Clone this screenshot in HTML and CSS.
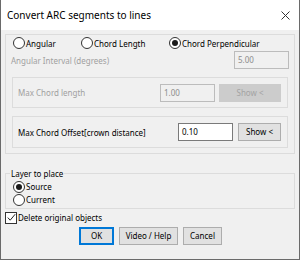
FILE: index.html
```html
<!DOCTYPE html>
<html lang="en">

<head>
    <meta charset="UTF-8">
    <title>Convert ARC segments to lines</title>
    <link rel="stylesheet" href="styles.css">
</head>

<body>
    <div class="window">
        <div class="titlebar">
            <span class="title">Convert ARC segments to lines</span>
            <svg class="close" width="9" height="9" viewBox="0 0 9 9">
                <path d="M0.5 0.5 L8.5 8.5 M8.5 0.5 L0.5 8.5" stroke="#333" stroke-width="1" fill="none"/>
            </svg>
        </div>

        <div class="content">
            <!-- Method group -->
            <div class="group method">
                <div class="radio-row">
                    <label class="radio opt-angular"><span class="dot"></span>Angular</label>
                    <label class="radio opt-length"><span class="dot"></span>Chord Length</label>
                    <label class="radio"><span class="dot checked"></span>Chord Perpendicular</label>
                </div>
                <div class="field-row">
                    <span class="muted">Angular Interval (degrees)</span>
                    <div class="input disabled">5.00</div>
                </div>

                <div class="group inner">
                    <span class="muted">Max Chord length</span>
                    <div class="input disabled push">1.00</div>
                    <div class="btn btn-disabled show-len">Show &lt;</div>
                </div>

                <div class="group inner second">
                    <span>Max Chord Offset[crown distance]</span>
                    <div class="input push">0.10</div>
                    <div class="btn show-offset">Show &lt;</div>
                </div>
            </div>

            <!-- Layer group -->
            <div class="group layer">
                <span class="legend">Layer to place</span>
                <label class="radio"><span class="dot checked"></span>Source</label>
                <label class="radio"><span class="dot"></span>Current</label>
            </div>

            <label class="check"><span class="box">
                <svg width="9" height="9" viewBox="0 0 9 9"><path d="M0.8 4.6 L3.2 7.2 L8.2 1.2" stroke="#222" stroke-width="1" fill="none"/></svg>
            </span>Delete original objects</label>

            <div class="buttons">
                <div class="btn btn-default">OK</div>
                <div class="btn btn-help">Video / Help</div>
                <div class="btn btn-cancel">Cancel</div>
            </div>
        </div>
    </div>
</body>

</html>
```

FILE: styles.css
```css
body {
    margin: 0;
    font-family: "Noto Sans", "Open Sans", sans-serif;
    font-size: 8px;
    color: #000;
    background: #fff;
}

.window {
    width: 300px;
    height: 260px;
    box-sizing: border-box;
    border: 1px solid #6a6a6a;
    border-top: none;
    background: #f0f0f0;
}

.titlebar {
    height: 30px;
    background: #fff;
    display: flex;
    align-items: center;
    justify-content: space-between;
    padding: 0 9px 0 6px;
}

.title {
    font-size: 10px;
    color: #000;
}

.content {
    padding: 4px 4px 0 4px;
}

.group {
    border: 1px solid #dcdcdc;
}

/* top group box */
.method {
    padding: 1px 5px 5px 5px;
}

.radio-row {
    display: flex;
    height: 14px;
    padding-left: 2px;
}

.radio {
    display: flex;
    align-items: center;
    height: 13px;
}

.radio-row .radio {
    height: 14px;
}

.opt-angular {
    width: 68px;
}

.opt-length {
    width: 88px;
}

.dot {
    width: 12px;
    height: 12px;
    border: 1px solid #333;
    border-radius: 50%;
    background: #fff;
    margin-right: 1px;
    box-sizing: border-box;
    position: relative;
}

.dot.checked::after {
    content: "";
    position: absolute;
    left: 2px;
    top: 2px;
    width: 6px;
    height: 6px;
    border-radius: 50%;
    background: #1a1a1a;
}

.field-row {
    display: flex;
    justify-content: space-between;
    align-items: center;
    height: 20px;
}

.muted {
    color: #a0a0a0;
}

.input {
    width: 55px;
    height: 18px;
    box-sizing: border-box;
    border: 1px solid #7a7a7a;
    background: #fff;
    padding: 0 3px;
    line-height: 15px;
}

.input.disabled {
    border-color: #bcbcbc;
    background: #f0f0f0;
    color: #8c8c8c;
}

.push {
    margin-left: auto;
}

.inner {
    display: flex;
    align-items: center;
    height: 31px;
    box-sizing: border-box;
    padding: 0 6px 0 5px;
    margin: 7px 1px 0 1px;
}

.inner.second {
    height: 32px;
    margin-top: 8px;
}

.btn {
    height: 18px;
    box-sizing: border-box;
    border: 1px solid #adadad;
    background: #e1e1e1;
    text-align: center;
    line-height: 16px;
}

.btn-disabled {
    border-color: #cccccc;
    background: #cccccc;
    color: #a3a3a3;
}

.show-len {
    width: 62px;
    margin-left: 4px;
}

.show-offset {
    width: 43px;
    margin-left: 5px;
}

/* layer group box */
.layer {
    margin-top: 19px;
    padding: 0 0 2px 7px;
}

.legend {
    display: block;
    width: fit-content;
    margin: -6px 0 0 -3px;
    padding: 0 1px;
    line-height: 12px;
    background: #f0f0f0;
}

.check {
    display: flex;
    align-items: center;
    margin-top: 2px;
    height: 13px;
}

.box {
    width: 12px;
    height: 12px;
    border: 1px solid #333;
    background: #fff;
    margin-right: 1px;
    box-sizing: border-box;
    display: flex;
    align-items: center;
    justify-content: center;
}

.buttons {
    display: flex;
    gap: 5px;
    margin: 3px 0 0 74px;
}

.btn-default {
    width: 35px;
    border: 2px solid #0078d7;
    line-height: 14px;
}

.btn-help {
    width: 59px;
}

.btn-cancel {
    width: 39px;
}
```
